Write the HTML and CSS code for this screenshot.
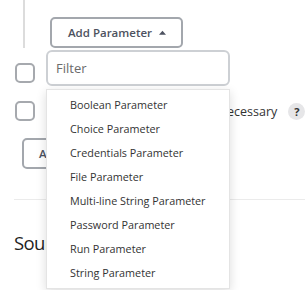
FILE: index.html
```html
<!DOCTYPE html>
<html lang="en">
<head>
    <meta charset="UTF-8">
    <meta name="viewport" content="width=device-width, initial-scale=1.0">
    <title>Configure</title>
    <link rel="stylesheet" href="styles.css">
</head>
<body>
    <div class="config">
        <div class="nested">
            <button class="btn add-btn" type="button">Add Parameter
                <svg class="caret" width="8" height="5" viewBox="0 0 8 5"><path d="M0 5 L4 0.5 L8 5 Z" fill="currentColor"/></svg>
            </button>
        </div>
        <label class="row row-first">
            <span class="checkbox"></span>
            <span class="label">Throttle builds</span>
        </label>
        <label class="row">
            <span class="checkbox"></span>
            <span class="label">Execute concurrent builds if necessary</span>
            <span class="help">?</span>
        </label>
        <button class="btn advanced" type="button">Advanced</button>
        <div class="divider"></div>
        <h2 class="section-title">Source Code Management</h2>
    </div>

    <div class="dropdown">
        <input class="filter" type="text" placeholder="Filter">
        <ul class="menu">
            <li>Boolean Parameter</li>
            <li>Choice Parameter</li>
            <li>Credentials Parameter</li>
            <li>File Parameter</li>
            <li>Multi-line String Parameter</li>
            <li>Password Parameter</li>
            <li>Run Parameter</li>
            <li>String Parameter</li>
        </ul>
    </div>
</body>
</html>
```

FILE: styles.css
```css
body {
    margin: 0;
    background: #fff;
    font-family: "Open Sans", "Noto Sans", sans-serif;
    color: #333;
    overflow: hidden;
}
.config {
    padding-left: 14px;
}
.nested {
    margin-left: 9px;
    border-left: 2px solid #dcdcdc;
    padding: 17px 0 0 25px;
}
.btn {
    display: inline-flex;
    align-items: center;
    height: 31px;
    background: #fff;
    border: 2px solid #a3a7ad;
    border-radius: 5px;
    font-family: inherit;
    font-size: 11.5px;
    font-weight: 600;
    color: #4d5260;
    padding: 0 15px;
    box-sizing: border-box;
    white-space: nowrap;
}
.add-btn {
    width: 133px;
    padding-left: 16px;
}
.caret {
    margin-left: 7px;
    margin-top: -1px;
}
.row {
    display: flex;
    align-items: center;
    height: 20px;
    margin-top: 18px;
    font-size: 12.5px;
    color: #333;
}
.row-first {
    margin-top: 15px;
}
.checkbox {
    width: 20px;
    height: 20px;
    margin-left: 1px;
    box-sizing: border-box;
    border: 2px solid #a6a9ae;
    border-radius: 5px;
    flex: none;
}
.label {
    margin-left: 19px;
    white-space: nowrap;
}
.help {
    display: inline-flex;
    align-items: center;
    justify-content: center;
    width: 17px;
    height: 17px;
    margin-left: 11px;
    border-radius: 50%;
    background: #e6e6e8;
    font-size: 11px;
    font-weight: 700;
    color: #333;
    flex: none;
}
.advanced {
    margin: 17px 0 0 8px;
}
.divider {
    border-top: 1px solid #ebebeb;
    margin-top: 30px;
}
.section-title {
    margin: 30px 0 0;
    font-size: 18.5px;
    letter-spacing: -0.6px;
    font-weight: 400;
    color: #1f1f1f;
}
.dropdown {
    position: absolute;
    top: 50px;
    left: 46px;
    width: 184px;
}
.filter {
    display: block;
    width: 100%;
    height: 36px;
    box-sizing: border-box;
    border: 2px solid #cdd0d4;
    border-radius: 6px;
    padding: 0 8px;
    font-family: inherit;
    font-size: 13px;
    background: #fff;
}
.filter::placeholder {
    color: #6b6b6b;
}
.menu {
    list-style: none;
    margin: 3px 0 0;
    padding: 3px 0;
    background: #fff;
    border: 1px solid #e4e4e4;
    box-shadow: 0 3px 10px rgba(0, 0, 0, 0.14);
}
.menu li {
    height: 24px;
    line-height: 24px;
    padding-left: 23px;
    font-size: 10.8px;
    color: #333;
    white-space: nowrap;
}
```
